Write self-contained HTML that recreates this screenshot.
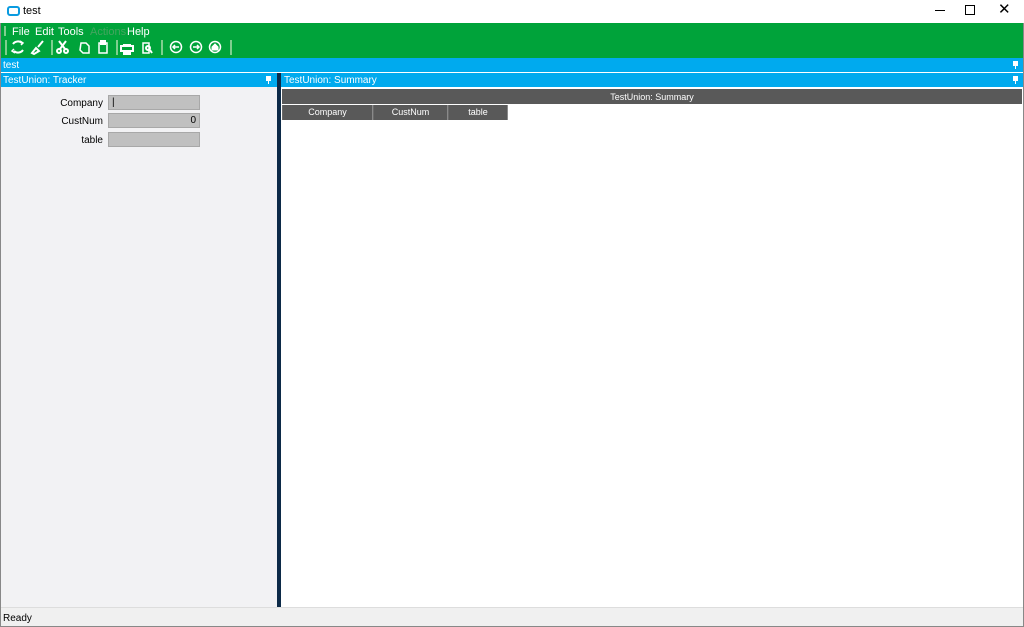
<!DOCTYPE html>
<html><head><meta charset="utf-8"><style>
*{margin:0;padding:0;box-sizing:border-box}
body{width:1024px;height:627px;overflow:hidden;font-family:"Liberation Sans",sans-serif;font-size:11px;background:#fff;position:relative}
.a{position:absolute}
.t{color:#fff;font-size:10px}
.sep{position:absolute;width:2px;background:#7fcf8f;}
.lbl{position:absolute;width:103px;text-align:right;color:#000;font-size:10px}
.inp{position:absolute;left:108px;width:92px;height:15px;background:#c0c0c0;border:1px solid #a8a8a8;font-size:10px;text-align:right;padding-right:3px;line-height:13px}
.col{position:absolute;top:105px;height:15px;background:#595959;color:#fff;font-size:9px;text-align:center;line-height:15px;border-right:1px solid #8a8a8a;border-left:1px solid #6a6a6a}
</style></head><body>
<div class="a" style="left:0;top:0;width:1024px;height:23px;background:#fff"></div>
<svg class="a" style="left:7px;top:6px" width="13" height="10"><rect x="1" y="1" width="11" height="8" rx="2" fill="none" stroke="#0a9be0" stroke-width="2"/></svg>
<div class="a" style="left:23px;top:5px;font-size:11px">test</div>
<div class="a" style="left:935px;top:10px;width:10px;height:1px;background:#000"></div>
<div class="a" style="left:965px;top:5px;width:10px;height:10px;border:1px solid #000"></div>
<div class="a" style="left:998px;top:0px;font-size:15px">✕</div>
<div class="a" style="left:0;top:23px;width:1024px;height:35px;background:#00a33a"></div>
<div class="sep" style="left:4px;top:26px;height:10px"></div>
<div class="a t" style="left:12px;top:26px;font-size:11px">File</div>
<div class="a t" style="left:35px;top:26px;font-size:11px">Edit</div>
<div class="a t" style="left:58px;top:26px;font-size:11px">Tools</div>
<div class="a" style="left:90px;top:26px;font-size:11px;color:#45a560">Actions</div>
<div class="a t" style="left:127px;top:26px;font-size:11px">Help</div>
<div class="sep" style="left:5px;top:40px;height:15px"></div>
<div class="sep" style="left:51px;top:40px;height:15px"></div>
<div class="sep" style="left:116px;top:40px;height:15px"></div>
<div class="sep" style="left:161px;top:40px;height:15px"></div>
<div class="sep" style="left:230px;top:40px;height:15px"></div>
<svg class="a" style="left:0;top:36px" width="240" height="22" fill="none" stroke="#fff" stroke-width="2">
<path d="M13 8a6 6 0 0 1 9-1M23 14a6 6 0 0 1-9 1"/><path d="M20 5l3 2-2 2M15 17l-3-2 2-2" stroke-width="1.5"/>
<path d="M32 17l4-5 3 3-5 3zM38 11l5-6"/>
<circle cx="59" cy="15" r="2"/><circle cx="66" cy="15" r="2"/><path d="M60 13l6-8M65 13l-6-8"/>
<path d="M81 7h5l3 3v7h-6l-3-3z" stroke-width="1.5"/>
<path d="M99 7h8v10h-8z" stroke-width="1.5"/><rect x="101" y="5" width="4" height="3" fill="#fff"/>
<path d="M123 9h8M121 10h12v5h-12z" stroke-width="2"/><rect x="124" y="15" width="6" height="3" fill="#fff"/>
<path d="M143 7h6v10h-6z" stroke-width="1.5"/><circle cx="148" cy="12" r="2"/><path d="M150 14l2 3"/>
<circle cx="176" cy="11" r="5.5" stroke-width="1.5"/><path d="M179 11h-6M175 9l-2 2 2 2" stroke-width="1.5"/>
<circle cx="196" cy="11" r="5.5" stroke-width="1.5"/><path d="M193 11h6M197 9l2 2-2 2" stroke-width="1.5"/>
<circle cx="215" cy="11" r="5.5" stroke-width="1.5"/><path d="M212 14v-3l3-3 3 3v3z" fill="#fff" stroke-width="1"/>
</svg>
<div class="a" style="left:0;top:58px;width:1024px;height:14px;background:#00aaee"></div>
<div class="a t" style="left:3px;top:60px">test</div>
<div class="a" style="left:0;top:73px;width:277px;height:534px;background:#f2f2f4"></div>
<div class="a" style="left:0;top:73px;width:277px;height:14px;background:#00aaee"></div>
<div class="a t" style="left:3px;top:75px">TestUnion: Tracker</div>
<div class="a" style="left:266px;top:76px;width:5px;height:5px;background:#fff"></div>
<div class="a" style="left:268px;top:80px;width:1px;height:4px;background:#fff"></div>
<div class="a" style="left:277px;top:73px;width:4px;height:534px;background:#0c2a48"></div>
<div class="a" style="left:281px;top:73px;width:743px;height:14px;background:#00aaee"></div>
<div class="a t" style="left:284px;top:75px">TestUnion: Summary</div>
<div class="a" style="left:1013px;top:76px;width:5px;height:5px;background:#fff"></div>
<div class="a" style="left:1015px;top:80px;width:1px;height:4px;background:#fff"></div>
<div class="a" style="left:1013px;top:61px;width:5px;height:5px;background:#fff"></div>
<div class="a" style="left:1015px;top:65px;width:1px;height:4px;background:#fff"></div>
<div class="lbl" style="top:98px">Company</div>
<div class="inp" style="top:95px;text-align:left;padding-left:3px">|</div>
<div class="lbl" style="top:116px">CustNum</div>
<div class="inp" style="top:113px">0</div>
<div class="lbl" style="top:135px">table</div>
<div class="inp" style="top:132px"></div>
<div class="a" style="left:282px;top:89px;width:740px;height:15px;background:#595959;color:#fff;font-size:9px;text-align:center;line-height:16px">TestUnion: Summary</div>
<div class="col" style="left:282px;width:91px">Company</div>
<div class="col" style="left:373px;width:75px">CustNum</div>
<div class="col" style="left:448px;width:60px">table</div>
<div class="a" style="left:0;top:607px;width:1024px;height:20px;background:#f0f0f0;border:1px solid #888;border-top:1px solid #ddd"></div>
<div class="a" style="left:3px;top:613px;font-size:10px">Ready</div>
<div class="a" style="left:0;top:23px;width:1px;height:604px;background:#888"></div>
<div class="a" style="left:1023px;top:23px;width:1px;height:604px;background:#888"></div>
</body></html>
